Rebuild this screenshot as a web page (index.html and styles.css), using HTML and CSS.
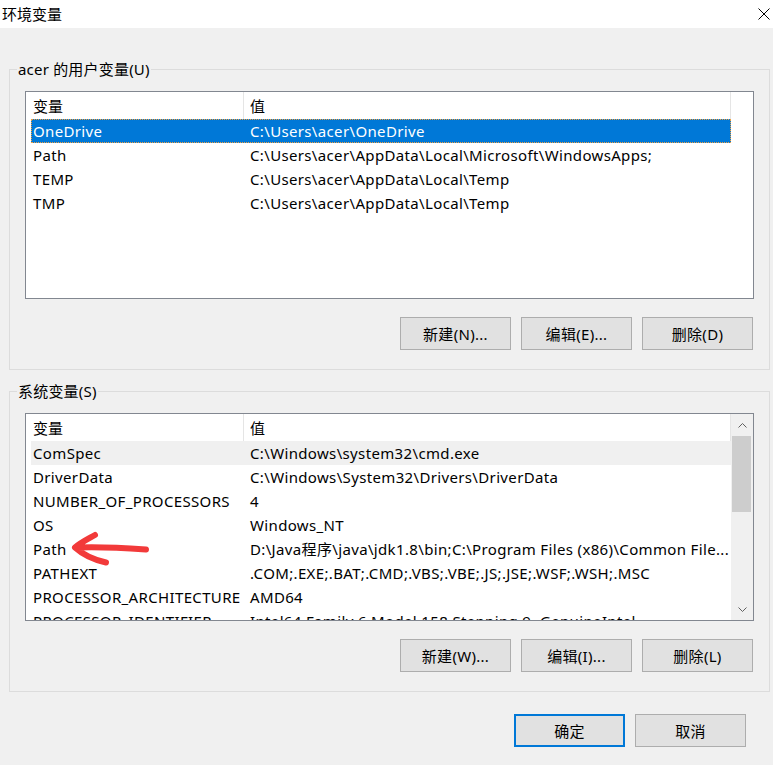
FILE: index.html
```html
<!DOCTYPE html>
<html lang="zh-CN">
<head>
    <meta charset="UTF-8">
    <meta name="viewport" content="width=device-width, initial-scale=1.0">
    <title>环境变量</title>
    <link rel="stylesheet" href="styles.css">
</head>
<body>
    <div class="title-bar">
        <span class="title">环境变量</span>
        <svg class="close-icon" width="12" height="12" viewBox="0 0 12 12">
            <path d="M0.5 0.5 L11.5 11.5 M11.5 0.5 L0.5 11.5" stroke="#000" stroke-width="1" fill="none"/>
        </svg>
    </div>

    <div class="dialog-body">
        <fieldset class="group">
            <legend>acer 的用户变量(U)</legend>
            <div class="group-content">
                <div class="var-list">
                    <div class="list-main">
                        <div class="list-head">
                            <span class="col-name">变量</span>
                            <span class="col-value">值</span>
                        </div>
                        <div class="list-rows">
                            <div class="row selected"><span class="cell-name">OneDrive</span><span class="cell-value">C:\Users\acer\OneDrive</span></div>
                            <div class="row"><span class="cell-name">Path</span><span class="cell-value">C:\Users\acer\AppData\Local\Microsoft\WindowsApps;</span></div>
                            <div class="row"><span class="cell-name">TEMP</span><span class="cell-value">C:\Users\acer\AppData\Local\Temp</span></div>
                            <div class="row"><span class="cell-name">TMP</span><span class="cell-value">C:\Users\acer\AppData\Local\Temp</span></div>
                        </div>
                    </div>
                    <div class="list-side"></div>
                </div>
                <div class="btn-row">
                    <button class="btn">新建(N)...</button>
                    <button class="btn">编辑(E)...</button>
                    <button class="btn">删除(D)</button>
                </div>
            </div>
        </fieldset>

        <fieldset class="group second">
            <legend>系统变量(S)</legend>
            <div class="group-content">
                <div class="var-list">
                    <div class="list-main">
                        <div class="list-head">
                            <span class="col-name">变量</span>
                            <span class="col-value">值</span>
                        </div>
                        <div class="list-rows">
                            <div class="row hover"><span class="cell-name">ComSpec</span><span class="cell-value">C:\Windows\system32\cmd.exe</span></div>
                            <div class="row"><span class="cell-name">DriverData</span><span class="cell-value">C:\Windows\System32\Drivers\DriverData</span></div>
                            <div class="row"><span class="cell-name">NUMBER_OF_PROCESSORS</span><span class="cell-value">4</span></div>
                            <div class="row"><span class="cell-name">OS</span><span class="cell-value">Windows_NT</span></div>
                            <div class="row"><span class="cell-name">Path</span><span class="cell-value">D:\Java程序\java\jdk1.8\bin;C:\Program Files (x86)\Common File...</span></div>
                            <div class="row"><span class="cell-name">PATHEXT</span><span class="cell-value">.COM;.EXE;.BAT;.CMD;.VBS;.VBE;.JS;.JSE;.WSF;.WSH;.MSC</span></div>
                            <div class="row"><span class="cell-name">PROCESSOR_ARCHITECTURE</span><span class="cell-value">AMD64</span></div>
                            <div class="row"><span class="cell-name">PROCESSOR_IDENTIFIER</span><span class="cell-value">Intel64 Family 6 Model 158 Stepping 9, GenuineIntel</span></div>
                        </div>
                        <!-- hand-drawn marker pointing at Path -->
                        <svg class="marker" width="84" height="40" viewBox="66 529 84 40">
                            <path d="M146 549.5 C125 548 100 546.5 77 547.5 M95 535 C88 539 80 543 75 547.5 C80 552 90 559 106 562.5"
                                  stroke="#f23a3a" stroke-width="6" fill="none" stroke-linecap="round" stroke-linejoin="round"/>
                        </svg>
                    </div>
                    <div class="scrollbar">
                        <div class="scroll-btn">
                            <svg width="9" height="5" viewBox="0 0 9 5"><polyline points="0.5,4.5 4.5,0.5 8.5,4.5" stroke="#606060" fill="none"/></svg>
                        </div>
                        <div class="scroll-track">
                            <div class="scroll-thumb"></div>
                        </div>
                        <div class="scroll-btn">
                            <svg width="9" height="5" viewBox="0 0 9 5"><polyline points="0.5,0.5 4.5,4.5 8.5,0.5" stroke="#606060" fill="none"/></svg>
                        </div>
                    </div>
                </div>
                <div class="btn-row">
                    <button class="btn">新建(W)...</button>
                    <button class="btn">编辑(I)...</button>
                    <button class="btn">删除(L)</button>
                </div>
            </div>
        </fieldset>

        <div class="dialog-footer">
            <button class="btn default">确定</button>
            <button class="btn">取消</button>
        </div>
    </div>
</body>
</html>
```

FILE: styles.css
```css
* {
    margin: 0;
    padding: 0;
    box-sizing: border-box;
}

body {
    width: 773px;
    height: 765px;
    overflow: hidden;
    background-color: #f0f0f0;
    color: #000;
    font-family: "Noto Sans", "Noto Sans CJK SC", sans-serif;
    font-size: 15px;
}

.title-bar {
    height: 28px;
    background-color: #fff;
    display: flex;
    align-items: center;
    justify-content: space-between;
    padding: 0 3px 0 2px;
}

.title {
    line-height: 28px;
}

.close-icon {
    display: block;
}

.dialog-body {
    padding: 31px 3px 0 9px;
}

.group {
    border: 1px solid #dcdcdc;
    min-width: 0;
}

.group.second {
    margin-top: 11px;
}

.group legend {
    margin-left: 7px;
    padding: 0 1px;
    line-height: 20px;
    letter-spacing: 0.2px;
}

.group-content {
    padding: 12px 15px 19px;
}

.var-list {
    height: 208px;
    border: 1px solid #828790;
    background-color: #fff;
    display: flex;
    overflow: hidden;
}

.list-main {
    flex: 1;
    position: relative;
    display: flex;
    flex-direction: column;
    min-width: 0;
}

.list-side {
    width: 22px;
}

.list-head {
    display: flex;
    height: 27px;
    line-height: 28px;
}

.col-name {
    width: 217px;
    padding-left: 7px;
}

.col-value {
    flex: 1;
    padding-left: 6px;
    border-left: 1px solid #e5e5e5;
    border-right: 1px solid #e5e5e5;
}

.list-rows {
    flex: 1;
    padding-left: 5px;
    overflow: hidden;
    letter-spacing: 0.35px;
}

.row {
    display: flex;
    height: 24px;
    line-height: 24px;
    white-space: nowrap;
}

.row.selected {
    background-color: #0078d7;
    color: #fff;
    outline: 1px dotted #f0a040;
    outline-offset: -1px;
}

.row.hover {
    background-color: #f0f0f0;
}

.cell-name {
    width: 212px;
    flex-shrink: 0;
    padding-left: 2px;
    overflow: hidden;
}

.cell-value {
    padding-left: 7px;
    overflow: hidden;
}

.marker {
    position: absolute;
    left: 40px;
    top: 115px;
}

.scrollbar {
    width: 22px;
    background-color: #f0f0f0;
    display: flex;
    flex-direction: column;
}

.scroll-btn {
    height: 22px;
    display: flex;
    align-items: center;
    justify-content: center;
}

.scroll-btn svg {
    display: block;
}

.scroll-track {
    flex: 1;
}

.scroll-thumb {
    height: 76px;
    margin: 0 2px 0 1px;
    background-color: #cdcdcd;
}

.btn-row {
    display: flex;
    justify-content: flex-end;
    gap: 10px;
    margin-top: 18px;
    padding-right: 1px;
}

.btn {
    width: 111px;
    height: 33px;
    border: 1px solid #adadad;
    background-color: #e1e1e1;
    color: #000;
    font-family: inherit;
    font-size: 15px;
    letter-spacing: 0.3px;
}

.btn.default {
    border: 2px solid #0078d7;
}

.dialog-footer {
    display: flex;
    justify-content: flex-end;
    gap: 10px;
    margin-top: 22px;
    padding-right: 24px;
}
```
